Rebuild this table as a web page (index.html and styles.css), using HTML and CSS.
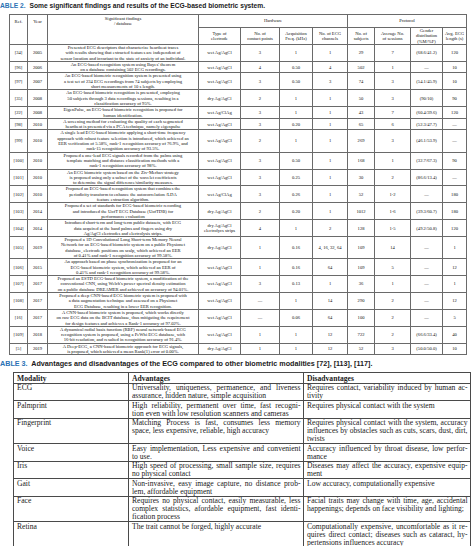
FILE: index.html
```html
<!DOCTYPE html>
<html>
<head>
<meta charset="utf-8">
<link rel="stylesheet" href="styles.css">
</head>
<body>
<div class="page">
<h2 class="caption cap2"><span class="lbl">ABLE 2.</span> Some significant findings and results of the ECG-based biometric system.</h2>
<table class="t2">
<colgroup>
<col class="c-ref"><col class="c-year"><col class="c-find"><col class="c-type"><col class="c-cp"><col class="c-acq"><col class="c-ch"><col class="c-sub"><col class="c-ses"><col class="c-gen"><col class="c-len">
</colgroup>
<thead>
<tr class="hr1">
<th rowspan="2" class="top one">Ref.</th>
<th rowspan="2" class="top one">Year</th>
<th rowspan="2" class="top two">Significant findings<br>/ database</th>
<th colspan="4">Hardware</th>
<th colspan="4">Protocol</th>
</tr>
<tr class="hr2">
<th>Type of<br>electrode</th>
<th>No. of<br>contact points</th>
<th>Acquisition<br>Freq. (kHz)</th>
<th>No. of ECG<br>channels</th>
<th>No. of<br>subjects</th>
<th>Average No.<br>of sessions</th>
<th>Gender<br>distribution<br>(%M/%F)</th>
<th>Avg. ECG<br>length (s)</th>
</tr>
</thead>
<tbody>
<tr><td>[34]</td><td>2005</td><td>Presented ECG descriptors that characterize heartbeat traces<br>with results showing that extracted features are independent of<br>sensor location and invariant to the state of anxiety of an individual.</td><td>wet Ag/AgCl</td><td>3</td><td>1</td><td>1</td><td>29</td><td>7</td><td>(68.6/41.2)</td><td>120</td></tr>
<tr><td>[96]</td><td>2006</td><td>An ECG-based recognition system using Bayes' theorem<br>on a database containing 502 ECG recordings.</td><td>wet Ag/AgCl</td><td>4</td><td>0.50</td><td>4</td><td>502</td><td>1</td><td>&mdash;</td><td>10</td></tr>
<tr><td>[97]</td><td>2007</td><td>An ECG-based biometric recognition system is presented using<br>a test set of 234 ECG recordings from 74 subjects by employing<br>short measurements of 10 s length.</td><td>wet Ag/AgCl</td><td>3</td><td>0.50</td><td>3</td><td>74</td><td>3</td><td>(54.1/45.9)</td><td>10</td></tr>
<tr><td>[35]</td><td>2008</td><td>An ECG-based biometric recognition is presented, employing<br>50 subjects through 3 data recordings sessions, resulting in a<br>classification accuracy of 95%.</td><td>dry Ag/AgCl</td><td>2</td><td>1</td><td>1</td><td>50</td><td>3</td><td>(90/10)</td><td>90</td></tr>
<tr><td>[22]</td><td>2008</td><td>EigenPulse, an ECG-based biometric recognition is proposed for<br>human identification.</td><td>wet Ag/ClAg</td><td>3</td><td>1</td><td>1</td><td>43</td><td>7</td><td>(60.4/39.6)</td><td>120</td></tr>
<tr><td>[98]</td><td>2010</td><td>A screening method for evaluating the quality of each segmented<br>heartbeat is presented via a PCA technique, namely eigenpulse</td><td>wet Ag/AgCl</td><td>3</td><td>0.20</td><td>1</td><td>65</td><td>6</td><td>(52.3/47.7)</td><td>&mdash;</td></tr>
<tr><td>[99]</td><td>2010</td><td>A single lead ECG-based biometric applying a short-time frequency<br>approach with robust feature selection is introduced, which achieved an<br>EER verification of 5.58%, rank-1 recognition accuracy of 76.9%, and<br>rank-15 recognition accuracy of 93.5%.</td><td>wet Ag/AgCl</td><td>2</td><td>1</td><td>1</td><td>269</td><td>3</td><td>(46.1/53.9)</td><td>&mdash;</td></tr>
<tr><td>[100]</td><td>2010</td><td>Proposed a one-lead ECG signals recorded from the palms using<br>template matching and distance classification methods with a<br>rank-1 recognition accuracy of 98%.</td><td>wet Ag/AgCl</td><td>3</td><td>0.50</td><td>1</td><td>168</td><td>1</td><td>(32.7/67.3)</td><td>90</td></tr>
<tr><td>[101]</td><td>2010</td><td>An ECG biometric system based on the Ziv-Merhav strategy<br>is proposed using only a subset of the wavelet coefficients<br>to determine the signal difference/similarity measures.</td><td>wet Ag/AgCl</td><td>3</td><td>0.25</td><td>1</td><td>30</td><td>2</td><td>(86.6/13.4)</td><td>&mdash;</td></tr>
<tr><td>[102]</td><td>2010</td><td>Proposed an ECG-based recognition system that combines the<br>periodicity transform to enhance the autocorrelation /LDA<br>feature extraction algorithm.</td><td>wet Ag/ClAg</td><td>3</td><td>0.26</td><td>1</td><td>52</td><td>1-2</td><td>&mdash;</td><td>180</td></tr>
<tr><td>[103]</td><td>2014</td><td>Proposed a set of standards for ECG-based biometric recording<br>and introduced the UofT ECG Database (UofTDB) for<br>performance evaluation</td><td>dry Ag/AgCl</td><td>2</td><td>0.20</td><td>1</td><td>1012</td><td>1-6</td><td>(39.3/60.7)</td><td>180</td></tr>
<tr><td>[104]</td><td>2014</td><td>Introduced short-term and long-term public datasets, with ECG<br>data acquired at the hand palms and fingers using dry<br>Ag/AgCl electrodes and electrolysis strips.</td><td>dry Ag/AgCl<br>electrolycs strips</td><td>4</td><td>1</td><td>2</td><td>128</td><td>1-5</td><td>(49.2/50.8)</td><td>120</td></tr>
<tr><td>[105]</td><td>2019</td><td>Proposed a 1D Convolutional Long Short-term Memory Neural<br>Network for an ECG-based biometric system on a public Physionet<br>database, electrode positions on scalp, which achieved an EER<br>of 0.41% and rank-1 recognition accuracy of 99.58%.</td><td>dry Ag/AgCl</td><td>1</td><td>0.16</td><td>4, 16, 32, 64</td><td>109</td><td>14</td><td>&mdash;</td><td>1</td></tr>
<tr><td>[106]</td><td>2015</td><td>An approach based on phase synchronization is proposed for an<br>ECG-based biometric system, which achieved an EER of<br>0.41% and rank-1 recognition accuracy of 99.58%.</td><td>wet Ag/AgCl</td><td>1</td><td>0.16</td><td>64</td><td>109</td><td>5</td><td>&mdash;</td><td>12</td></tr>
<tr><td>[107]</td><td>2017</td><td>Proposed an ESTD ECG-based biometric system, a modification of the<br>conventional CNN, using Welch's power spectral density estimation<br>on a public database DREAMER and achieved an accuracy of 94.01%.</td><td>wet Ag/AgCl</td><td>3</td><td>0.13</td><td>1</td><td>36</td><td>1</td><td>&mdash;</td><td>1</td></tr>
<tr><td>[108]</td><td>2017</td><td>Proposed a deep CNN-based ECG biometric system is proposed with<br>a data augmentation technique and assessed on a Physionet<br>ECG Database, resulting in a lower EER recognition.</td><td>wet Ag/AgCl</td><td>&mdash;</td><td>1</td><td>14</td><td>290</td><td>2</td><td>&mdash;</td><td>12</td></tr>
<tr><td>[16]</td><td>2017</td><td>A CNN-based biometric system is proposed, which works directly<br>on raw ECG data on the BCIT database, thus mitigating the requirement<br>for design features and achieves a Rank-1 accuracy of 97.02%.</td><td>wet Ag/AgCl</td><td>&mdash;</td><td>0.06</td><td>64</td><td>100</td><td>2</td><td>&mdash;</td><td>5</td></tr>
<tr><td>[109]</td><td>2018</td><td>A dynamical radial basis function (RBF) neural network-based ECG<br>recognition system is proposed, using a PeWhi ECG database, with<br>16-bit resolution, and resulted in recognition accuracy of 91.4%.</td><td>wet Ag/AgCl</td><td>1</td><td>1</td><td>12</td><td>722</td><td>2</td><td>(66.6/33.4)</td><td>40</td></tr>
<tr><td>[5]</td><td>2019</td><td>A Deep-ECG, a CNN-based biometric approach for ECG signals,<br>is proposed, which achieved a mean Rank(1) error of 0.00%.</td><td>dry Ag/AgCl</td><td>1</td><td>1</td><td>12</td><td>52</td><td>3</td><td>(50.0/50.0)</td><td>10</td></tr>
</tbody>
</table>

<h2 class="caption cap3"><span class="lbl">ABLE 3.</span> Advantages and disadvantages of the ECG compared to other biometric modalities [72], [113], [117].</h2>
<table class="t3">
<colgroup><col class="c-mod"><col class="c-adv"><col class="c-dis"></colgroup>
<thead>
<tr><th>Modality</th><th>Advantages</th><th>Disadvantages</th></tr>
</thead>
<tbody>
<tr><td>ECG</td>
<td><span class="l">Universality, uniqueness, permanence, and liveness</span>assurance, hidden nature, simple acquisition</td>
<td><span class="l">Requires contact, variability induced by human ac-</span>tivity</td></tr>
<tr><td>Palmprint</td>
<td><span class="l">High reliability, permanent over time, fast recogni-</span>tion even with low resolution scanners and cameras</td>
<td>Requires physical contact with the system</td></tr>
<tr><td>Fingerprint</td>
<td><span class="l">Matching Process is fast, consumes less memory</span>space, less expensive, reliable, high accuracy</td>
<td><span class="l">Requires physical contact with the system, accuracy</span><span class="l">influences by obstacles such as cuts, scars, dust, dirt,</span>twists</td></tr>
<tr><td>Voice</td>
<td><span class="l">Easy implementation, Less expensive and convenient</span>to use.</td>
<td><span class="l">Accuracy influenced by throat disease, low perfor-</span>mance</td></tr>
<tr><td>Iris</td>
<td><span class="l">High speed of processing, small sample size, requires</span>no physical contact</td>
<td><span class="l">Diseases may affect the accuracy, expensive equip-</span>ment</td></tr>
<tr><td>Gait</td>
<td><span class="l">Non-invasive, easy image capture, no distance prob-</span>lem, affordable equipment</td>
<td>Low accuracy, computationally expensive</td></tr>
<tr><td>Face</td>
<td><span class="l">Requires no physical contact, easily measurable, less</span><span class="l">complex statistics, afordable equipment, fast identi-</span>fication process</td>
<td><span class="l">Facial traits may change with time, age, accidental</span>happenings; depends on face visibility and lighting;</td></tr>
<tr><td>Retina</td>
<td>The trait cannot be forged, highly accurate</td>
<td><span class="l">Computationally expensive, uncomfortable as it re-</span><span class="l">quires direct contact; diseases such as cataract, hy-</span>pertensions influences accuracy</td></tr>
</tbody>
</table>
</div>
</body>
</html>
```
FILE: styles.css
```css
html, body {
  margin: 0;
  padding: 0;
  background: #ffffff;
}
body {
  color: #1a1a1a;
  font-family: "Liberation Serif", "Times New Roman", serif;
  overflow: hidden;
}
.page {
  padding-top: 1px;
}
.caption {
  margin: 0;
  font-family: "Liberation Sans Narrow", "Liberation Sans", Arial, sans-serif;
  font-weight: bold;
  font-size: 7.2px;
  line-height: 10px;
  white-space: nowrap;
  color: #1a1a1a;
}
.cap2 {
  font-size: 6.7px;
}
.lbl {
  color: #2b72b5;
  margin-right: 2px;
}

/* ---------- Table 2 ---------- */
.t2 {
  border-collapse: collapse;
  table-layout: fixed;
  width: 457px;
  margin: 3px 0 0 9px;
  color: #111111;
}
.c-ref { width: 18px; }
.c-year { width: 20px; }
.c-find { width: 151px; }
.c-type { width: 42px; }
.c-cp { width: 39px; }
.c-acq { width: 33px; }
.c-ch { width: 35px; }
.c-sub { width: 27px; }
.c-ses { width: 36px; }
.c-gen { width: 32px; }
.c-len { width: 24px; }

.t2 th, .t2 td {
  border: 1px solid #6a6a6a;
  padding: 0;
  font-size: 4.6px;
  line-height: 5.3px;
  font-weight: normal;
  text-align: center;
  vertical-align: middle;
  white-space: nowrap;
  overflow: hidden;
}
.t2 .hr1 { height: 13px; }
.t2 .hr2 { height: 17px; }
.t2 th.top { vertical-align: top; }
.t2 th.one { padding-top: 3.7px; }
.t2 th.two { padding-top: 1.2px; }

/* ---------- Table 3 ---------- */
.cap3 {
  margin-top: 4px;
}
.t3 {
  border-collapse: collapse;
  table-layout: fixed;
  width: 457px;
  margin: 3px 0 0 13px;
}
.c-mod { width: 115px; }
.c-adv { width: 175px; }
.c-dis { width: 167px; }

.t3 th, .t3 td {
  border: 1px solid #4a4a4a;
  padding: 0.5px 2.5px 0 3px;
  font-size: 7.6px;
  line-height: 8px;
  text-align: justify;
  vertical-align: top;
}
.t3 th {
  font-weight: bold;
  text-align: left;
  padding-top: 1.5px;
}
.t3 .l {
  display: block;
  text-align: justify;
  text-align-last: justify;
  white-space: nowrap;
}
```
